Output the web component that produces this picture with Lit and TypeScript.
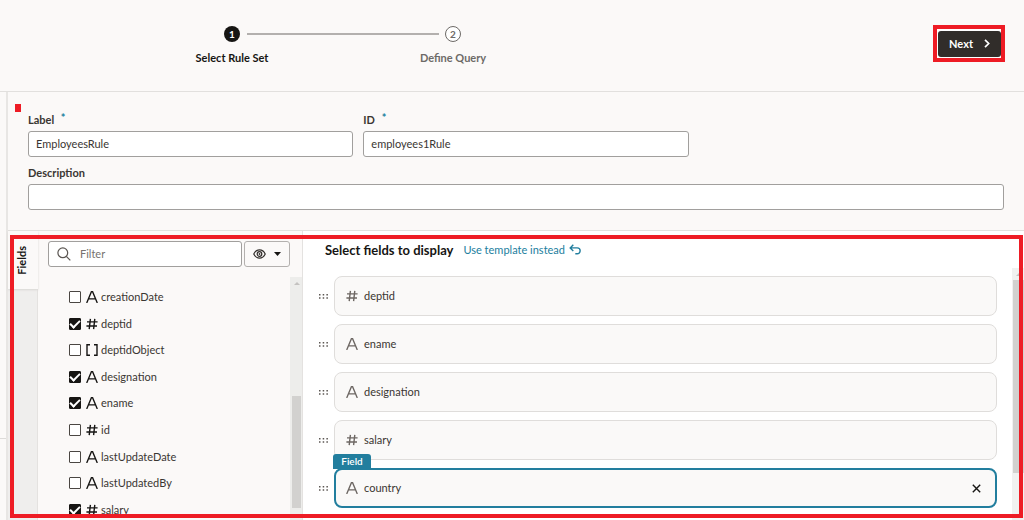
import { LitElement, html, css, svg, nothing } from "lit";
import { customElement, property, state } from "lit/decorators.js";

type Kind = "text" | "number" | "array";

interface Field {
  name: string;
  kind: Kind;
  checked: boolean;
}

const glyphs = {
  text: svg`<path d="M.7 11.900 5.500.5h1l4.800 11.400M2.500 7.900h7" />`,
  number: svg`<path d="M4.4.8 3.2 11.200M8.8.8 7.6 11.200M1 3.900h10.600M.4 8H11" />`,
  array: svg`<path d="M4 .8H1v10.400h3M8 .8h3v10.400H8" />`,
};

@customElement("kind-icon")
export class KindIcon extends LitElement {
  @property() kind: Kind = "text";

  static styles = css`
    :host { display: block; width: 12px; height: 12px; }
    .glyph { display: block; fill: none; stroke: currentColor; stroke-width: 1.4; }
  `;

  render() {
    return html`<svg class="glyph" width="12" height="12" viewBox="0 0 12 12" aria-hidden="true">${glyphs[this.kind]}</svg>`;
  }
}

@customElement("app-root")
export class AppRoot extends LitElement {
  @state() private fields: Field[] = [
    { name: "creationDate", kind: "text", checked: false },
    { name: "deptid", kind: "number", checked: true },
    { name: "deptidObject", kind: "array", checked: false },
    { name: "designation", kind: "text", checked: true },
    { name: "ename", kind: "text", checked: true },
    { name: "id", kind: "number", checked: false },
    { name: "lastUpdateDate", kind: "text", checked: false },
    { name: "lastUpdatedBy", kind: "text", checked: false },
    { name: "salary", kind: "number", checked: true },
  ];

  @state() private chosen: { name: string; kind: Kind }[] = [
    { name: "deptid", kind: "number" },
    { name: "ename", kind: "text" },
    { name: "designation", kind: "text" },
    { name: "salary", kind: "number" },
    { name: "country", kind: "text" },
  ];

  @state() private selected = "country";

  static styles = css`
    :host {
      display: flex;
      flex-direction: column;
      position: relative;
      height: 100vh;
      overflow: hidden;
      background: #fbf9f8;
      color: #3a3632;
      font: 11px/16px Lato, "Noto Sans", sans-serif;
    }
    * { box-sizing: border-box; }
    input, button { font: inherit; color: inherit; margin: 0; }
    svg { display: block; }

    .top {
      position: relative;
      display: flex;
      align-items: center;
      flex: none;
      height: 92px;
      padding: 0 23px 0 197px;
      border-bottom: 1px solid #e2e0de;
    }
    .steps { display: flex; margin: 0; padding: 0; list-style: none; }
    .step { display: flex; flex-direction: column; align-items: center; gap: 8px; width: 70px; font-weight: 700; white-space: nowrap; }
    .step.later { width: 62px; color: #6d6a67; }
    .num {
      display: grid;
      place-items: center;
      width: 16px;
      height: 16px;
      border-radius: 50%;
      background: #161513;
      color: #fff;
      font-size: 10px;
      line-height: 14px;
    }
    .step.now { color: #161513; }
    .later .num { border: 1px solid #6d6a67; background: #fff; color: #6d6a67; }
    .bar { width: 192px; height: 2px; margin: 7px -17px 0 -20px; background: #b3b0ae; }
    .mark { border: 4px solid #ee1c25; background: #fff; padding: 2px 0 1px 1px; margin: 0 -4px 5px auto; }
    .next {
      display: flex;
      align-items: center;
      gap: 11px;
      height: 26px;
      padding: 0 11px;
      border: 0;
      border-radius: 3px;
      background: #312d2a;
      color: #fff;
      font-weight: 700;
    }

    .page { display: flex; flex: 1; min-height: 0; }
    .rail { flex: none; width: 8px; border-right: 2px solid #e8e6e4; }
    .rail::before { content: ""; display: block; height: 346px; border-bottom: 1px solid #dddbd9; }
    .main { display: flex; flex-direction: column; flex: 1; min-width: 0; }

    .form { display: grid; gap: 8px; flex: none; padding: 20px 20px; border-bottom: 1px solid #e2e0de; }
    .row { display: flex; gap: 10px; }
    .entry { display: flex; flex-direction: column; gap: 3px; flex: none; width: 100%; font-weight: 700; }
    .row .entry { width: 33.333%; }
    .req { color: #227e9e; margin-left: 4px; line-height: 8px; vertical-align: 2px; }
    .box {
      width: 100%;
      height: 26px;
      padding: 0 7px 1px;
      border: 1px solid #a19f9d;
      border-radius: 3px;
      background: #fff;
      font-weight: 400;
      outline: none;
    }

    .body { display: grid; grid-template-columns: 30px 265px 1fr; flex: 1; min-height: 0; }
    .tabs { background: #efeeed; border-right: 1px solid #e4e2e0; min-height: 0; }
    .tab {
      display: flex;
      align-items: center;
      justify-content: center;
      width: 30px;
      height: 58px;
      padding: 0 2px 0 0;
      border: 0;
      background: #fbf9f8;
      box-shadow: 0 1px 2px #d8d6d4;
      color: #161513;
      font-weight: 700;
      writing-mode: vertical-rl;
    }
    .tab span { transform: rotate(180deg); }
    .side { display: flex; flex-direction: column; min-height: 0; border-right: 1px solid #e4e2e0; }
    .tools { display: flex; gap: 2px; padding: 10px 12px 10px 10px; flex: none; }
    .search { display: flex; align-items: center; gap: 9px; flex: 1; padding-left: 8px; border: 1px solid #a19f9d; border-radius: 3px; background: #fff; }
    .query { flex: 1; min-width: 0; border: 0; padding: 0; background: none; outline: none; }
    .query::placeholder { color: #76726f; opacity: 1; }
    .view { display: flex; align-items: center; justify-content: center; gap: 8px; width: 46px; height: 26px; padding: 0; border: 1px solid #b3b0ae; border-radius: 3px; background: none; }
    .scroll { display: flex; flex: 1; min-height: 0; overflow: hidden; }
    .list { display: grid; grid-auto-rows: 1fr; align-items: center; flex: 1; height: 239px; margin: 7px 0 0; padding: 0 0 0 31px; list-style: none; }
    .item { display: flex; align-items: center; gap: 5px; }
    .item kind-icon { margin-right: -2px; color: #161513; }
    .tick { appearance: none; display: grid; place-items: center; width: 12px; height: 12px; border: 1px solid #4a4642; border-radius: 1px; background: #fff; }
    .tick:checked { background: #161513; border-color: #161513; }
    .tick:checked::before { content: ""; width: 8px; height: 4px; border: solid #fff; border-width: 0 0 2px 2px; transform: translateY(-1px) rotate(-45deg); }
    .name { line-height: 16px; }
    .track { display: flex; flex-direction: column; flex: none; width: 12px; padding: 5px 1px 0 2px; background: #ededeb; }
    .track svg { margin: 0 auto; flex: none; }
    .thumb { height: 112px; margin-top: 111px; background: #d2d1cf; flex: none; }

    .canvas { display: flex; flex-direction: column; min-width: 0; min-height: 0; background: #fff; }
    .head { display: flex; align-items: center; gap: 10px; flex: none; height: 37px; padding-left: 22px; }
    .title { margin: 0; color: #161513; font-size: 13px; line-height: 16px; font-weight: 700; }
    .swap { display: flex; align-items: center; gap: 4px; color: #227e9e; text-decoration: none; }
    .cards { display: grid; align-content: start; gap: 8px; flex: 1; margin: 0; padding: 8px 15px 0 16px; list-style: none; }
    .slot { display: flex; align-items: center; gap: 6px; color: #5b5652; }
    .card {
      position: relative;
      display: flex;
      align-items: center;
      gap: 6px;
      flex: 1;
      height: 40px;
      padding: 0 15px 0 11px;
      border: 1px solid #dfdddb;
      border-radius: 8px;
      background: #faf9f8;
      color: #6d6763;
    }
    .card .name { color: #3a3632; flex: 1; }
    .card.active { border: 2px solid #227e9e; padding: 0 14px 0 10px; }
    .tag { position: absolute; left: -3px; bottom: 37px; width: 38px; border-radius: 3px 3px 0 0; background: #227e9e; color: #fff; font-size: 10px; line-height: 15px; text-align: center; font-weight: 600; }
    .close { display: block; border: 0; padding: 0; background: none; color: #161513; }
    .canvas .track { width: 12px; padding: 5px 0 0 1px; background: #f1f1f0; }
    .canvas .thumb { height: 193px; margin-top: 4px; }

    .frame { position: absolute; inset: 235px 1px 2px 10px; border: 4px solid #ee1c25; pointer-events: none; }
    .fleck { position: absolute; left: 15px; top: 104px; width: 6px; height: 8px; background: #ee1c25; }
  `;

  private toggle(name: string) {
    this.fields = this.fields.map((f) => (f.name === name ? { ...f, checked: !f.checked } : f));
  }

  private arrow() {
    return html`<svg width="6" height="3" viewBox="0 0 6 3" aria-hidden="true"><path d="M0 3 3 0l3 3z" fill="#c4c2c0" /></svg>`;
  }

  private grip() {
    return html`<svg width="9" height="5" viewBox="0 0 9 5" aria-hidden="true">
      <path d="M0 0h1.5v1.5H0zM3.7 0h1.5v1.5H3.7zM7.4 0h1.5v1.5H7.4zM0 3.2h1.5v1.5H0zM3.7 3.2h1.5v1.5H3.7zM7.4 3.2h1.5v1.5H7.4z" fill="currentColor" />
    </svg>`;
  }

  render() {
    return html`
      <header class="top">
        <ol class="steps">
          <li class="step now"><span class="num">1</span><span>Select Rule Set</span></li>
          <li class="bar" role="presentation"></li>
          <li class="step later"><span class="num">2</span><span>Define Query</span></li>
        </ol>
        <div class="mark">
          <button class="next">
            Next
            <svg width="6" height="9" viewBox="0 0 6 9" aria-hidden="true"><path d="m1 .8 3.7 3.7L1 8.2" fill="none" stroke="#fff" stroke-width="1.7" /></svg>
          </button>
        </div>
      </header>

      <div class="page">
        <div class="rail"></div>
        <main class="main">
          <form class="form">
            <div class="row">
              <label class="entry"><span>Label <span class="req">*</span></span>
                <input class="box" value="EmployeesRule" required /></label>
              <label class="entry"><span>ID <span class="req">*</span></span>
                <input class="box" value="employees1Rule" required /></label>
            </div>
            <label class="entry"><span>Description</span><input class="box" /></label>
          </form>

          <div class="body">
            <div class="tabs"><button class="tab"><span>Fields</span></button></div>
            <section class="side">
              <div class="tools">
                <label class="search">
                  <svg width="14" height="14" viewBox="0 0 14 14" aria-hidden="true"><g fill="none" stroke="#5b5652" stroke-width="1.2"><circle cx="5.8" cy="5.8" r="4.9" /><path d="m9.3 9.3 4 4" /></g></svg>
                  <input class="query" placeholder="Filter" aria-label="Filter" />
                </label>
                <button class="view" aria-label="View options">
                  <svg width="13" height="10" viewBox="0 0 13 10" aria-hidden="true"><g fill="none" stroke="#312d2a" stroke-width="1.2"><path d="M.8 5C2 2.4 4 .9 6.5.9S11 2.4 12.2 5C11 7.600 9 9.100 6.500 9.100S2 7.600.8 5z" /><circle cx="6.500" cy="5" r="2.300" /></g><circle cx="6.500" cy="5" r=".9" fill="#312d2a" /></svg>
                  <svg width="7" height="4" viewBox="0 0 7 4" aria-hidden="true"><path d="M0 0h7L3.500 4z" fill="#161513" /></svg>
                </button>
              </div>
              <div class="scroll">
                <ul class="list">
                  ${this.fields.map(
                    (f) => html`<li>
                      <label class="item">
                        <input class="tick" type="checkbox" .checked=${f.checked} @change=${() => this.toggle(f.name)} />
                        <kind-icon .kind=${f.kind}></kind-icon>
                        <span class="name">${f.name}</span>
                      </label>
                    </li>`,
                  )}
                </ul>
                <div class="track">${this.arrow()}<div class="thumb"></div></div>
              </div>
            </section>

            <section class="canvas">
              <div class="head">
                <h2 class="title">Select fields to display</h2>
                <a class="swap" href="#template">Use template instead
                  <svg width="12" height="11" viewBox="0 0 12 11" aria-hidden="true"><path d="M4.300.8 1.200 3.900l3.100 3.100M1.400 3.900h6.800a2.900 2.900 0 0 1 0 5.900H6.300" fill="none" stroke="currentColor" stroke-width="1.400" /></svg>
                </a>
              </div>
              <div class="scroll">
                <ul class="cards">
                  ${this.chosen.map((c) => {
                    const active = c.name === this.selected;
                    return html`<li class="slot">
                      ${this.grip()}
                      <div class="card ${active ? "active" : ""}" @click=${() => (this.selected = c.name)}>
                        ${active ? html`<span class="tag">Field</span>` : nothing}
                        <kind-icon .kind=${c.kind}></kind-icon>
                        <span class="name">${c.name}</span>
                        ${active
                          ? html`<button class="close" aria-label="Remove">
                              <svg width="9" height="9" viewBox="0 0 9 9" aria-hidden="true"><path d="m.8.8 7.400 7.400M8.200.8.8 8.200" stroke="currentColor" stroke-width="1.400" /></svg>
                            </button>`
                          : nothing}
                      </div>
                    </li>`;
                  })}
                </ul>
                <div class="track">${this.arrow()}<div class="thumb"></div></div>
              </div>
            </section>
          </div>
        </main>
      </div>
      <div class="frame"></div>
      <div class="fleck"></div>
    `;
  }
}
